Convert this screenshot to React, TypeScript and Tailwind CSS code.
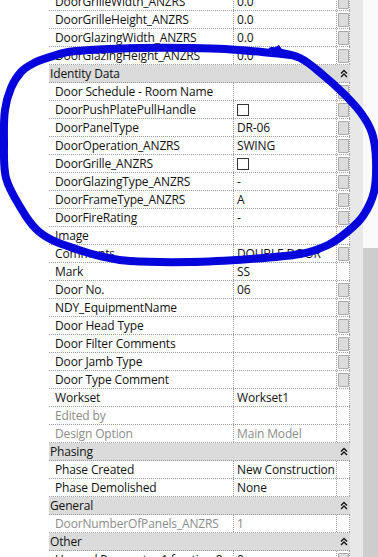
import React from "react";

type Row =
  | { kind: "h"; label: string }
  | {
      kind: "r";
      label: string;
      value?: string;
      check?: boolean;
      btn?: boolean;
      gray?: boolean;
      valGray?: boolean;
    };

const rows: Row[] = [
  { kind: "r", label: "DoorGrilleWidth_ANZRS", value: "0.0", btn: true },
  { kind: "r", label: "DoorGrilleHeight_ANZRS", value: "0.0", btn: true },
  { kind: "r", label: "DoorGlazingWidth_ANZRS", value: "0.0", btn: true },
  { kind: "r", label: "DoorGlazingHeight_ANZRS", value: "0.0", btn: true },
  { kind: "h", label: "Identity Data" },
  { kind: "r", label: "Door Schedule - Room Name", btn: true },
  { kind: "r", label: "DoorPushPlatePullHandle", check: true, btn: true },
  { kind: "r", label: "DoorPanelType", value: "DR-06", btn: true },
  { kind: "r", label: "DoorOperation_ANZRS", value: "SWING", btn: true },
  { kind: "r", label: "DoorGrille_ANZRS", check: true, btn: true },
  { kind: "r", label: "DoorGlazingType_ANZRS", value: "-", btn: true },
  { kind: "r", label: "DoorFrameType_ANZRS", value: "A", btn: true },
  { kind: "r", label: "DoorFireRating", value: "-", btn: true },
  { kind: "r", label: "Image" },
  { kind: "r", label: "Comments", value: "DOUBLE DOOR", btn: true },
  { kind: "r", label: "Mark", value: "SS" },
  { kind: "r", label: "Door No.", value: "06", btn: true },
  { kind: "r", label: "NDY_EquipmentName", btn: true },
  { kind: "r", label: "Door Head Type", btn: true },
  { kind: "r", label: "Door Filter Comments", btn: true },
  { kind: "r", label: "Door Jamb Type", btn: true },
  { kind: "r", label: "Door Type Comment", btn: true },
  { kind: "r", label: "Workset", value: "Workset1" },
  { kind: "r", label: "Edited by", gray: true },
  { kind: "r", label: "Design Option", value: "Main Model", gray: true, valGray: true },
  { kind: "h", label: "Phasing" },
  { kind: "r", label: "Phase Created", value: "New Construction" },
  { kind: "r", label: "Phase Demolished", value: "None" },
  { kind: "h", label: "General" },
  { kind: "r", label: "DoorNumberOfPanels_ANZRS", value: "1", gray: true, valGray: true },
  { kind: "h", label: "Other" },
  { kind: "r", label: "Unused Parameter 1 fraction 8", value: "0", btn: true },
];

function Chevrons() {
  return (
    <svg width="8" height="9" viewBox="0 0 8 9" fill="none">
      <path d="M1 4.5 L4 1.5 L7 4.5" stroke="#111" strokeWidth="1.3" />
      <path d="M1 8 L4 5 L7 8" stroke="#111" strokeWidth="1.3" />
    </svg>
  );
}

function smoothPath(pts: [number, number][]) {
  let d = `M${pts[0][0]} ${pts[0][1]}`;
  for (let i = 0; i < pts.length - 1; i++) {
    const p0 = pts[i - 1] || pts[i];
    const p1 = pts[i];
    const p2 = pts[i + 1];
    const p3 = pts[i + 2] || p2;
    const c1x = p1[0] + (p2[0] - p0[0]) / 6;
    const c1y = p1[1] + (p2[1] - p0[1]) / 6;
    const c2x = p2[0] - (p3[0] - p1[0]) / 6;
    const c2y = p2[1] - (p3[1] - p1[1]) / 6;
    d += ` C${c1x.toFixed(1)} ${c1y.toFixed(1)} ${c2x.toFixed(1)} ${c2y.toFixed(1)} ${p2[0]} ${p2[1]}`;
  }
  return d;
}

const loop: [number, number][] = [
  [272, 51],
  [300, 58],
  [323, 75],
  [344, 94],
  [361, 113],
  [372, 133],
  [376, 160],
  [374, 192],
  [363, 216],
  [347, 232],
  [328, 245],
  [300, 254],
  [250, 259],
  [190, 262],
  [130, 261],
  [100, 256],
  [76, 249],
  [52, 240],
  [36, 229],
  [22, 210],
  [6, 178],
  [4, 140],
  [5, 110],
  [11, 88],
  [21, 72],
  [34, 63],
  [50, 57],
  [68, 52],
  [90, 50],
  [140, 48],
  [190, 48],
  [225, 49],
  [262, 52],
  [290, 55],
];

export default function App() {
  return (
    <div
      className="relative w-[378px] h-[557px] overflow-hidden bg-white flex text-[12px] tracking-[-0.15px] text-[#111]"
      style={{ fontFamily: '"Open Sans", "Noto Sans", sans-serif' }}
    >
      <div className="w-[49px] shrink-0 bg-white" />
      <div className="w-[301px] shrink-0 flex flex-col mt-[-7px]">
        {rows.map((r, i) =>
          r.kind === "h" ? (
            <div
              key={i}
              className="h-[18px] shrink-0 flex items-center bg-[#dbdbdb] border-b border-dotted border-[#9a9a9a]"
            >
              <div className="flex-1 pl-[1px] pt-[1px] leading-none">{r.label}</div>
              <div className="w-[13px] flex justify-center">
                <Chevrons />
              </div>
            </div>
          ) : (
            <div
              key={i}
              className="h-[18px] shrink-0 flex border-b border-dotted border-[#9a9a9a]"
            >
              <div
                className={
                  "w-[185px] shrink-0 pl-[6px] pt-[1px] flex items-center whitespace-nowrap overflow-hidden border-r border-dotted border-[#9a9a9a] " +
                  (r.gray ? "text-[#8c8c8c]" : "")
                }
              >
                {r.label}
              </div>
              <div
                className={
                  "w-[103px] shrink-0 pl-[3px] pt-[1px] flex items-center whitespace-nowrap overflow-hidden border-r border-dotted border-[#9a9a9a] " +
                  (r.valGray ? "text-[#8c8c8c]" : "")
                }
              >
                {r.check ? (
                  <div className="w-[12px] h-[12px] border border-[#333] bg-white" />
                ) : (
                  r.value
                )}
              </div>
              <div className="w-[13px] shrink-0 flex items-center justify-center border-r border-dotted border-[#9a9a9a]">
                {r.btn && (
                  <div className="w-[11px] h-[14px] bg-[#dcdcdc] border border-[#a9a9a9] rounded-[1px]" />
                )}
              </div>
            </div>
          )
        )}
      </div>
      <div className="w-[13px] shrink-0 bg-[#e8e8e8]" />
      <div className="w-[15px] shrink-0 flex flex-col">
        <div className="h-[248px] bg-[#fafafa]" />
        <div className="flex-1 bg-[#cdcdcd]" />
      </div>

      <svg
        className="absolute inset-0 pointer-events-none"
        width="378"
        height="557"
        viewBox="0 0 378 557"
      >
        <path
          d={smoothPath(loop)}
          fill="none"
          stroke="#0505dc"
          strokeWidth="8"
          strokeLinecap="round"
          strokeLinejoin="round"
        />
        <path d="M264 53 L279 45 L286 55 Z" fill="#0505dc" />
      </svg>
    </div>
  );
}
